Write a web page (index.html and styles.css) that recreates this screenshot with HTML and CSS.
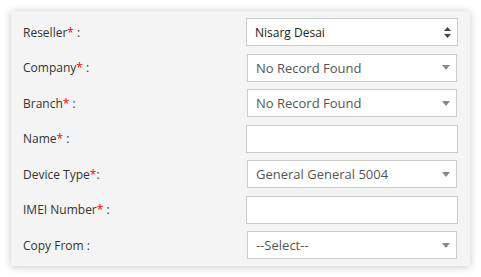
FILE: index.html
```
<!DOCTYPE html>
<html>
<head>
<meta charset="utf-8">
<link rel="stylesheet" href="styles.css">
</head>
<body>
<div class="panel">
  <div class="row">
    <div class="label">Reseller<span class="req">*</span> :</div>
    <div class="field native"><span class="val">Nisarg Desai</span>
      <svg class="updown" width="7" height="11" viewBox="0 0 7 11"><path d="M3.5 0L7 4H0Z M0 7H7L3.5 11Z" fill="#444"/></svg>
    </div>
  </div>
  <div class="row">
    <div class="label">Company<span class="req">*</span> :</div>
    <div class="field sel"><span class="val">No Record Found</span>
      <svg class="down" width="8" height="5" viewBox="0 0 8 5"><path d="M0 0H8L4 5Z" fill="#888"/></svg>
    </div>
  </div>
  <div class="row">
    <div class="label">Branch<span class="req">*</span> :</div>
    <div class="field sel"><span class="val">No Record Found</span>
      <svg class="down" width="8" height="5" viewBox="0 0 8 5"><path d="M0 0H8L4 5Z" fill="#888"/></svg>
    </div>
  </div>
  <div class="row">
    <div class="label">Name<span class="req">*</span> :</div>
    <div class="field input"></div>
  </div>
  <div class="row">
    <div class="label">Device Type<span class="req">*</span>:</div>
    <div class="field sel"><span class="val">General General 5004</span>
      <svg class="down" width="8" height="5" viewBox="0 0 8 5"><path d="M0 0H8L4 5Z" fill="#888"/></svg>
    </div>
  </div>
  <div class="row">
    <div class="label">IMEI Number<span class="req">*</span> :</div>
    <div class="field input"></div>
  </div>
  <div class="row">
    <div class="label">Copy From :</div>
    <div class="field sel"><span class="val">--Select--</span>
      <svg class="down" width="8" height="5" viewBox="0 0 8 5"><path d="M0 0H8L4 5Z" fill="#888"/></svg>
    </div>
  </div>
</div>
</body>
</html>
```
FILE: styles.css
```
html, body { margin: 0; padding: 0; background: #fff; }
body { padding: 11px; }
.panel {
  width: 459px;
  height: 255px;
  box-sizing: border-box;
  background: #f4f4f4;
  box-shadow: 0 1px 8px rgba(0,0,0,0.22);
  padding: 7px 12px 7px 12px;
  display: flex;
  flex-direction: column;
  gap: 7.5px;
}
.row {
  display: flex;
  align-items: center;
  justify-content: space-between;
  height: 28px;
}
.label {
  font-family: "Open Sans", sans-serif;
  font-size: 12px;
  color: #333;
}
.req { color: #f00; }
.field {
  box-sizing: border-box;
  height: 28px;
  background: #fff;
  border: 1px solid #ccc;
  display: flex;
  align-items: center;
  justify-content: space-between;
  font-family: "Open Sans", sans-serif;
  font-size: 13px;
  color: #444;
}
.native, .input { width: 212px; }
.native { padding: 0 6px 0 8px; color: #222; font-size: 12px; }
.sel { width: 210px; margin-right: 1px; padding: 0 6px 0 8px; color: #555; }
```
